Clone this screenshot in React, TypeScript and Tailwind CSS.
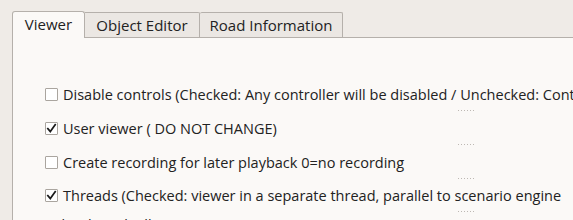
import React from "react";

const rows = [
  { label: "Disable controls (Checked: Any controller will be disabled / Unchecked: Controllers will be active)", checked: false, gap: "mt-[10px]" },
  { label: "User viewer ( DO NOT CHANGE)", checked: true, gap: "mt-[11px]" },
  { label: "Create recording for later playback 0=no recording", checked: false, gap: "mt-[11px]" },
  { label: "Threads (Checked: viewer in a separate thread, parallel to scenario engine", checked: true, gap: "mt-[10px]" },
];

function Check({ checked }: { checked: boolean }) {
  return (
    <div className="w-[13px] h-[13px] shrink-0 border border-[#aaa59f] bg-white rounded-[1px] flex items-center justify-center">
      {checked && (
        <svg width="11" height="11" viewBox="0 0 11 11">
          <path d="M1.8 5.6 L4.3 8.6 L9.2 1.8" fill="none" stroke="#1a1a1a" strokeWidth="1.7" strokeLinecap="square" strokeLinejoin="miter" />
        </svg>
      )}
    </div>
  );
}

function Dots() {
  return (
    <div className="h-px pl-[445px] flex">
      <div className="flex gap-[2px]">
        {[0, 1, 2, 3, 4, 5].map((i) => (
          <div key={i} className="w-px h-px bg-[#bdb8b3]" />
        ))}
      </div>
    </div>
  );
}

export default function App() {
  return (
    <div
      className="w-[573px] h-[220px] overflow-hidden bg-[#efebe7] text-[#222] text-[14.5px]"
      style={{ fontFamily: '"Open Sans", "Noto Sans", sans-serif' }}
    >
      <div className="pl-[12px] pt-[11px] flex items-end h-[37px] text-[15px]">
        <div className="relative z-10 -mb-px h-[27px] w-[73px] border border-b-0 border-[#b5b0ab] rounded-t-[3px] bg-[#fbf9f7] flex items-center justify-center pb-[1px]">
          Viewer
        </div>
        <div className="h-[25px] w-[115px] border-t border-r border-[#b5b0ab] rounded-tr-[2px] bg-[#ebe7e3] flex items-center justify-center">
          Object Editor
        </div>
        <div className="h-[25px] w-[143px] border-t border-r border-[#b5b0ab] rounded-t-[2px] bg-[#ebe7e3] flex items-center justify-center">
          Road Information
        </div>
      </div>
      <div className="ml-[12px] h-[200px] border-t border-l border-[#b5b0ab] bg-[#fbf9f7] pt-[50px]">
        {rows.map((r, i) => (
          <div key={i} className={i === 0 ? "" : r.gap}>
            <div className="h-[13px] pl-[32px] flex items-center whitespace-nowrap leading-[13px]">
              <Check checked={r.checked} />
              <span className="ml-[5px]">{r.label}</span>
            </div>
            <div className="mt-[9px]">
              <Dots />
            </div>
          </div>
        ))}
        <div className="mt-[6px] pl-[32px] whitespace-nowrap leading-[13px]">Lidar thread ti lk</div>
      </div>
    </div>
  );
}
